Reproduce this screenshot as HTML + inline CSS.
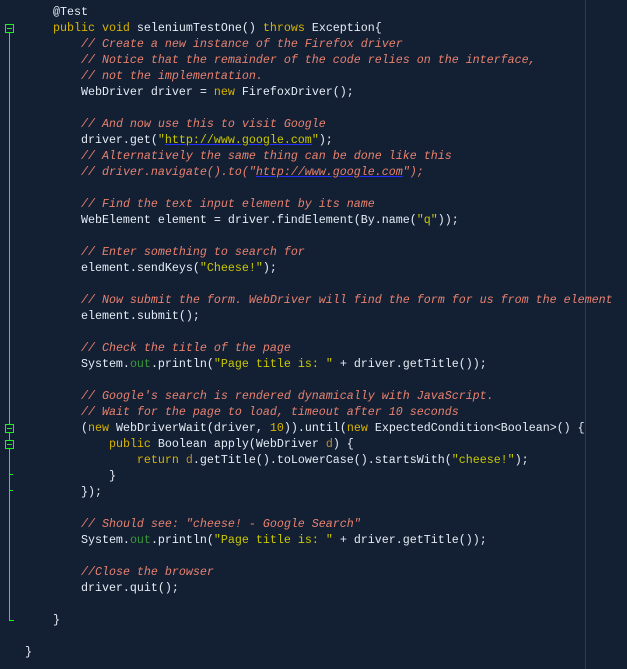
<!DOCTYPE html><html><head><style>
body{margin:0;width:627px;height:669px;background:#131f33;overflow:hidden;position:relative}
pre{position:absolute;left:25px;top:4px;margin:0;font-family:"Liberation Mono",monospace;font-size:11.67px;line-height:16px;color:#e6ecf5}
.c{color:#e8826f;font-style:italic}.k{color:#d6b400}.s{color:#c9c800}.g{color:#3a9a3a}.d{color:#c08a30}.u{text-decoration:underline;text-decoration-color:#2030ff}
.v{position:absolute;left:585px;top:0;width:1px;height:669px;background:#2b3a52}
.gl{position:absolute;background:#22ee22}
.bx{position:absolute;width:7px;height:7px;border:1px solid #22ee22;background:#131f33}
.bx:after{content:"";position:absolute;left:1px;top:3px;width:5px;height:1px;background:#22ee22}
</style></head><body>
<div class="v"></div>
<div class="gl" style="left:9px;top:28px;width:1px;height:593px"></div>
<div class="gl" style="left:9px;top:620px;width:5px;height:1px"></div>
<div class="gl" style="left:9px;top:490px;width:4px;height:1px"></div>
<div class="gl" style="left:9px;top:474px;width:4px;height:1px"></div>
<div class="bx" style="left:5px;top:24px"></div>
<div class="bx" style="left:5px;top:424px"></div>
<div class="bx" style="left:5px;top:440px"></div>
<pre>    @Test
    <span class="k">public void</span> seleniumTestOne() <span class="k">throws</span> Exception{
        <span class="c">// Create a new instance of the Firefox driver</span>
        <span class="c">// Notice that the remainder of the code relies on the interface,</span>
        <span class="c">// not the implementation.</span>
        WebDriver driver = <span class="k">new</span> FirefoxDriver();

        <span class="c">// And now use this to visit Google</span>
        driver.get(<span class="s">"<span class="u">http://www.google.com</span>"</span>);
        <span class="c">// Alternatively the same thing can be done like this</span>
        <span class="c">// driver.navigate().to("<span class="u">http://www.google.com</span>");</span>

        <span class="c">// Find the text input element by its name</span>
        WebElement element = driver.findElement(By.name(<span class="s">"q"</span>));

        <span class="c">// Enter something to search for</span>
        element.sendKeys(<span class="s">"Cheese!"</span>);

        <span class="c">// Now submit the form. WebDriver will find the form for us from the element</span>
        element.submit();

        <span class="c">// Check the title of the page</span>
        System.<span class="g">out</span>.println(<span class="s">"Page title is: "</span> + driver.getTitle());

        <span class="c">// Google's search is rendered dynamically with JavaScript.</span>
        <span class="c">// Wait for the page to load, timeout after 10 seconds</span>
        (<span class="k">new</span> WebDriverWait(driver, <span class="k">10</span>)).until(<span class="k">new</span> ExpectedCondition&lt;Boolean&gt;() {
            <span class="k">public</span> Boolean apply(WebDriver <span class="d">d</span>) {
                <span class="k">return</span> <span class="d">d</span>.getTitle().toLowerCase().startsWith(<span class="s">"cheese!"</span>);
            }
        });

        <span class="c">// Should see: "cheese! - Google Search"</span>
        System.<span class="g">out</span>.println(<span class="s">"Page title is: "</span> + driver.getTitle());

        <span class="c">//Close the browser</span>
        driver.quit();

    }

}</pre>
</body></html>
